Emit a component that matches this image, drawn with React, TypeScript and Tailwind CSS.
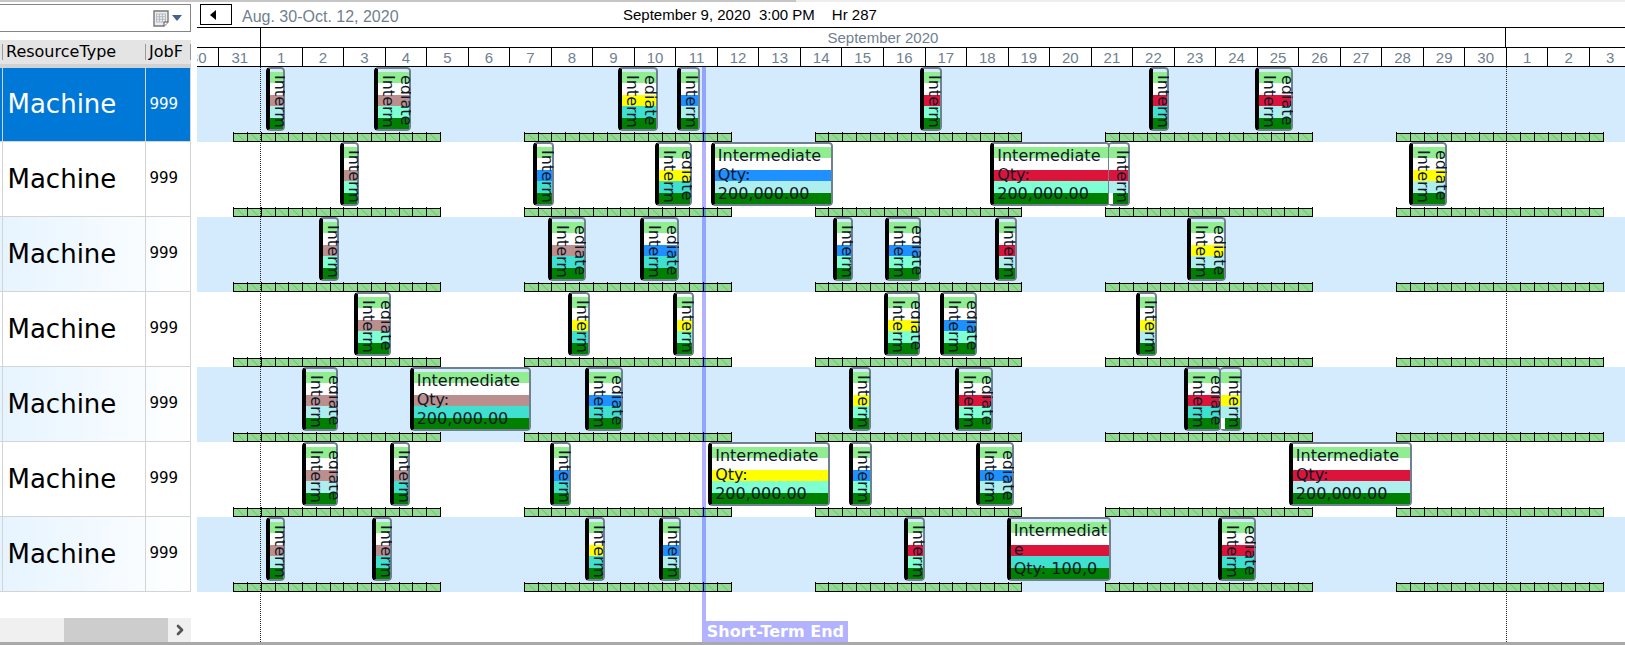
import clsx from 'clsx';
import { ChevronRight } from 'lucide-react';

type Lot = 'brown' | 'yellow' | 'blue' | 'red';
type Grade = 'pale' | 'turquoise' | 'aqua';

type Job = {
  // Hours since September 1, 00:00
  start: number;
  end: number;
  lot: Lot;
  grade: Grade;
  lines?: string[];
  continued?: boolean;
};

const RANGE_START = -36.4;
const RANGE_HOURS = 825.2;
const SHIFT_HOURS = 8;
const SHIFTS_PER_WEEK = 15;
// Blocks shorter than this have room for one line of upright text only
const TWO_LINE_HOURS = 18;

const LOT_COLORS: Record<Lot, string> = {
  brown: 'bg-[#bc8f8f]',
  yellow: 'bg-[#ffff00]',
  blue: 'bg-[#1e90ff]',
  red: 'bg-[#dc143c]',
};

const GRADE_COLORS: Record<Grade, string> = {
  pale: 'bg-[#afeeee]',
  turquoise: 'bg-[#40e0d0]',
  aqua: 'bg-[#7fffd4]',
};

const FULL = ['Intermediate', 'Qty:', '200,000.00'];
const WRAPPED = ['Intermediat', 'e', 'Qty: 100,0'];

const resources: Job[][] = [
  [
    { start: 3.5, end: 14.5, lot: 'brown', grade: 'pale' },
    { start: 66, end: 87, lot: 'brown', grade: 'aqua' },
    { start: 207, end: 230, lot: 'yellow', grade: 'turquoise' },
    { start: 241, end: 254, lot: 'blue', grade: 'pale' },
    { start: 381.5, end: 394, lot: 'red', grade: 'aqua' },
    { start: 514, end: 525.5, lot: 'red', grade: 'turquoise' },
    { start: 575, end: 597, lot: 'red', grade: 'pale' },
  ],
  [
    { start: 46, end: 57.5, lot: 'brown', grade: 'aqua' },
    { start: 157.5, end: 170, lot: 'blue', grade: 'turquoise' },
    { start: 228, end: 249.5, lot: 'yellow', grade: 'turquoise' },
    { start: 260.5, end: 331, lot: 'blue', grade: 'pale', lines: FULL },
    { start: 422, end: 491, lot: 'red', grade: 'aqua', lines: FULL },
    { start: 490, end: 503, lot: 'red', grade: 'pale', continued: true },
    { start: 664, end: 686, lot: 'yellow', grade: 'pale' },
  ],
  [
    { start: 34, end: 45.5, lot: 'brown', grade: 'aqua' },
    { start: 166.5, end: 188.5, lot: 'brown', grade: 'turquoise' },
    { start: 219.5, end: 242, lot: 'blue', grade: 'turquoise' },
    { start: 331, end: 342.5, lot: 'blue', grade: 'aqua' },
    { start: 361, end: 382, lot: 'blue', grade: 'aqua' },
    { start: 425, end: 437.5, lot: 'red', grade: 'pale' },
    { start: 535.5, end: 558, lot: 'yellow', grade: 'pale' },
  ],
  [
    { start: 54.5, end: 75.5, lot: 'brown', grade: 'aqua' },
    { start: 178, end: 190.5, lot: 'yellow', grade: 'turquoise' },
    { start: 238.5, end: 251, lot: 'yellow', grade: 'aqua' },
    { start: 360.5, end: 381.5, lot: 'yellow', grade: 'aqua' },
    { start: 393, end: 414.5, lot: 'blue', grade: 'aqua' },
    { start: 506.5, end: 518.5, lot: 'yellow', grade: 'pale' },
  ],
  [
    { start: 24, end: 45, lot: 'brown', grade: 'pale' },
    { start: 86.5, end: 156.5, lot: 'brown', grade: 'turquoise', lines: FULL },
    { start: 188, end: 209.5, lot: 'blue', grade: 'turquoise' },
    { start: 340.5, end: 353, lot: 'yellow', grade: 'aqua' },
    { start: 401.5, end: 423.5, lot: 'red', grade: 'aqua' },
    { start: 534, end: 555.5, lot: 'red', grade: 'turquoise' },
    { start: 555, end: 567.5, lot: 'yellow', grade: 'pale', continued: true },
  ],
  [
    { start: 24, end: 45, lot: 'brown', grade: 'pale' },
    { start: 75, end: 86.5, lot: 'brown', grade: 'turquoise' },
    { start: 167.5, end: 180, lot: 'blue', grade: 'turquoise' },
    { start: 259, end: 329.5, lot: 'yellow', grade: 'aqua', lines: FULL },
    { start: 340.5, end: 353.5, lot: 'blue', grade: 'aqua' },
    { start: 413.5, end: 436, lot: 'blue', grade: 'pale' },
    { start: 594.5, end: 665.5, lot: 'red', grade: 'pale', lines: FULL },
  ],
  [
    { start: 3.5, end: 14.5, lot: 'brown', grade: 'pale' },
    { start: 65, end: 76, lot: 'brown', grade: 'turquoise' },
    { start: 188, end: 199.5, lot: 'yellow', grade: 'turquoise' },
    { start: 230.5, end: 243.5, lot: 'blue', grade: 'pale' },
    { start: 372, end: 384.5, lot: 'red', grade: 'aqua' },
    { start: 431.5, end: 491.5, lot: 'red', grade: 'turquoise', lines: WRAPPED },
    { start: 553.5, end: 575.5, lot: 'red', grade: 'turquoise' },
  ],
];

const days = [30, 31, ...Array.from({ length: 30 }, (_, i) => i + 1), 1, 2, 3];
const weekStarts = [-15.5, 152.5, 320.5, 488.5, 656.5];

const width = (hours: number) => `${(hours / RANGE_HOURS) * 100}%`;
const left = (hour: number) => width(hour - RANGE_START);

function JobBlock({ job }: { job: Job }) {
  const { start, end, lot, grade, lines, continued } = job;
  const upright = end - start < TWO_LINE_HOURS ? ['Interm'] : ['Interm', 'ediate'];
  return (
    <div
      className="absolute top-0 h-16 overflow-hidden rounded-sm"
      style={{ left: left(start), width: width(end - start) }}
    >
      <div
        className={clsx(
          'flex h-full flex-col rounded-sm border-2 border-[#708090] pt-[3px]',
          continued ? 'border-l' : 'border-l-4 border-l-black',
        )}
      >
        <div className="flex-1 bg-[#90ee90]" />
        <div className="flex-1 bg-white" />
        <div className={clsx('flex-1', LOT_COLORS[lot])} />
        <div className={clsx('flex-1', GRADE_COLORS[grade])} />
        <div className={clsx('flex-1 bg-[#008000]', continued && 'border-l-4 border-white')} />
      </div>
      <div
        className={clsx(
          'absolute inset-0 whitespace-nowrap text-[#101828]',
          lines
            ? 'pt-1 pl-[7px] text-base/[19px]'
            : 'pt-2 pl-[5px] text-base/[18px] [writing-mode:vertical-lr]',
        )}
      >
        {(lines ?? upright).map((line) => (
          <div key={line}>{line}</div>
        ))}
      </div>
    </div>
  );
}

function ShiftBar({ start }: { start: number }) {
  return (
    <div
      className="absolute bottom-0 flex h-[10px] border-r border-black"
      style={{ left: left(start), width: width(SHIFT_HOURS * SHIFTS_PER_WEEK) }}
    >
      {Array.from({ length: SHIFTS_PER_WEEK }, (_, i) => (
        <div key={i} className="flex-1 border-l border-black pt-px">
          <div className="h-[9px] border-y border-black bg-[#90dc90] bg-[linear-gradient(45deg,transparent_46%,#7cc47c_48%,#7cc47c_54%,transparent_56%)]" />
        </div>
      ))}
    </div>
  );
}

function CalendarIcon() {
  return (
    <svg width="16" height="17" viewBox="0 0 16 17">
      <path d="M1 1h14v11l-4 4H1z" fill="#ececec" stroke="#777" strokeWidth="1.4" />
      <path d="M3.5 4v8M6.5 4v8M9.5 4v8M12.5 4v8M3 4h10M3 6.7h10M3 9.3h10M3 12h10" stroke="#b4bbc2" />
      <path d="M11 16v-4h4" fill="#fff" stroke="#555" />
    </svg>
  );
}

function ResourceGrid() {
  return (
    <section className="flex w-[191px] shrink-0 flex-col pt-[2px]">
      <div className="flex h-7 items-center justify-end border border-l-0 border-[#858585] pr-2">
        <button type="button" aria-label="Choose view" className="flex items-center gap-[3px]">
          <CalendarIcon />
          <svg width="10" height="6" viewBox="0 0 10 6">
            <path d="M0 0h10L5 6z" fill="#46628c" />
          </svg>
        </button>
      </div>
      <table className="mt-2 w-full table-fixed border-collapse text-left">
        <colgroup>
          <col className="w-[2px]" />
          <col className="w-[143px]" />
          <col />
        </colgroup>
        <thead>
          <tr className="h-[26px] border-b-4 border-[#d2d2d2] bg-[#e4e4e4] text-base/[22px] whitespace-nowrap">
            <th />
            <th className="font-normal">
              <div className="h-4 border-l border-[#999] pl-[3px] leading-4">ResourceType</div>
            </th>
            <th className="font-normal">
              <div className="h-4 border-x border-[#999] pl-[3px] leading-4">JobF</div>
            </th>
          </tr>
        </thead>
        <tbody>
          {resources.map((_, i) => (
            <tr
              key={i}
              className={clsx(
                'h-[75px] border-b border-[#d4d4d4]',
                i === 0 && 'bg-[#0078d7] text-white',
                i > 0 && i % 2 === 0 && 'bg-linear-to-r from-[#e6f4ff] to-white',
              )}
            >
              <td className="border-r border-[#d4d4d4]" />
              <td className="border-r border-[#d4d4d4] pl-[5px] text-[26px]/8">Machine</td>
              <td className="border-r border-[#d4d4d4] pl-1 text-[15px]">999</td>
            </tr>
          ))}
        </tbody>
      </table>
      <div className="mt-auto flex h-6 items-center bg-[#f0f0f0]">
        <div className="ml-16 h-full w-[104px] bg-[#cdcdcd]" />
        <button type="button" aria-label="Scroll right" className="flex flex-1 justify-center">
          <ChevronRight size={16} strokeWidth={4} className="text-[#555]" />
        </button>
      </div>
    </section>
  );
}

function Timeline() {
  return (
    <section className="flex min-w-0 flex-1 flex-col overflow-hidden">
      <div className="flex h-[25px] items-center font-['Liberation_Sans',Arial,sans-serif]">
        <button
          type="button"
          aria-label="Previous"
          className="ml-[3px] flex h-[21px] w-8 items-center border border-black pl-[9px]"
        >
          <svg width="6" height="10" viewBox="0 0 6 10">
            <path d="M6 0v10L0 5z" />
          </svg>
        </button>
        <span className="w-[381px] pt-1 pl-[10px] text-base/5 text-[#708090]">Aug. 30-Oct. 12, 2020</span>
        <span className="pt-px pl-[10px] text-[15px]/5 whitespace-pre">September 9, 2020  3:00 PM</span>
        <span className="pt-px pl-[17px] text-[15px]/5">Hr 287</span>
      </div>
      <div className="flex h-5 border-t border-black text-center font-['Liberation_Sans',Arial,sans-serif] text-[15px]/[19px] text-[#708090]">
        <div style={{ width: width(-RANGE_START) }} />
        <div className="border-x border-black" style={{ width: width(720) }}>
          September 2020
        </div>
      </div>
      <div className="h-5 overflow-hidden border-y border-black font-['Liberation_Sans',Arial,sans-serif] text-[15px]/[19px] text-[#708090]">
        <div className="flex" style={{ marginLeft: left(-48) }}>
          {days.map((day, i) => (
            <div
              key={i}
              className="h-[18px] shrink-0 border-l border-black text-center"
              style={{ width: `${(24 / (RANGE_HOURS + 48 + RANGE_START)) * 100}%` }}
            >
              {day}
            </div>
          ))}
        </div>
      </div>
      <div className="relative flex-1">
        {resources.map((jobs, i) => (
          <div key={i} className={clsx('relative h-[75px]', i % 2 === 0 && 'bg-[#d3ebfc]')}>
            {weekStarts.map((start) => (
              <ShiftBar key={start} start={start} />
            ))}
            {jobs.map((job) => (
              <JobBlock key={job.start} job={job} />
            ))}
          </div>
        ))}
        {[0, 720].map((hour) => (
          <div
            key={hour}
            className="absolute inset-y-0 border-l border-dotted border-[#222]"
            style={{ left: left(hour) }}
          />
        ))}
        <div className="absolute inset-y-0 w-1 bg-[#0000ff]/30" style={{ left: left(255.5) }} />
        <div
          className="absolute bottom-0 bg-[#b2b2ff] pr-1 pl-[2px] text-base/[21px] font-bold text-white"
          style={{ left: left(257) }}
        >
          Short-Term End
        </div>
      </div>
    </section>
  );
}

export default function App() {
  return (
    <main className="flex min-h-screen flex-col border-b-[3px] border-[#a9a9a9] bg-white font-['DejaVu_Sans',Verdana,sans-serif] text-black">
      <div className="flex h-[2px] bg-[#eeeeee]">
        <div className="w-[49%] bg-[#c6c6c6]" />
      </div>
      <div className="flex flex-1 gap-[6px]">
        <ResourceGrid />
        <Timeline />
      </div>
    </main>
  );
}
